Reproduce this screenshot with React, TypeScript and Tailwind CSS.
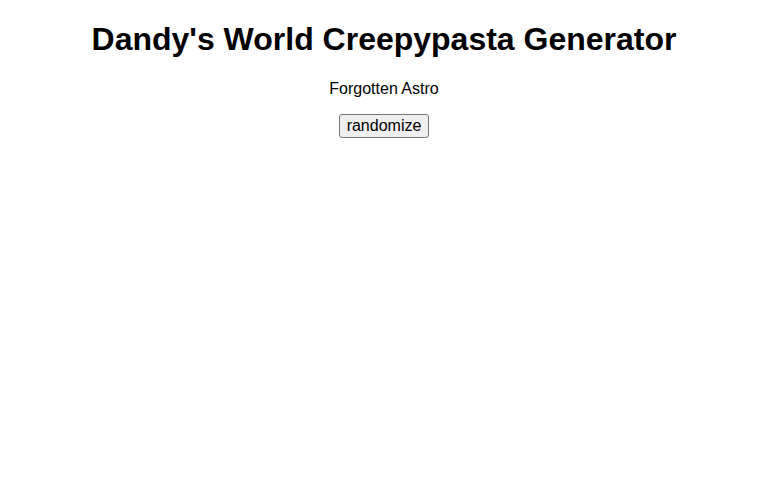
import { useState } from "react";

const NAMES = [
  "Forgotten Astro",
  "Twisted Dandy",
  "Hollow Pebble",
  "Silent Shrimpo",
  "Corrupted Vee",
  "Lost Sprout",
];

export default function App() {
  const [name, setName] = useState(NAMES[0]);

  const randomize = () => {
    setName(NAMES[Math.floor(Math.random() * NAMES.length)]);
  };

  return (
    <div className="text-center text-black font-['Liberation_Sans',Arial,sans-serif]">
      <h1 className="text-[32px] font-bold leading-[normal] pt-[21.44px] mb-[21.44px]">
        Dandy's World Creepypasta Generator
      </h1>
      <p className="text-base leading-[normal] mb-4">{name}</p>
      <button
        onClick={randomize}
        className="text-base leading-[normal] bg-[#efefef] border border-[#767676] rounded-[3px] px-[7px] py-[2px] hover:bg-[#e5e5e5]"
      >
        randomize
      </button>
    </div>
  );
}
